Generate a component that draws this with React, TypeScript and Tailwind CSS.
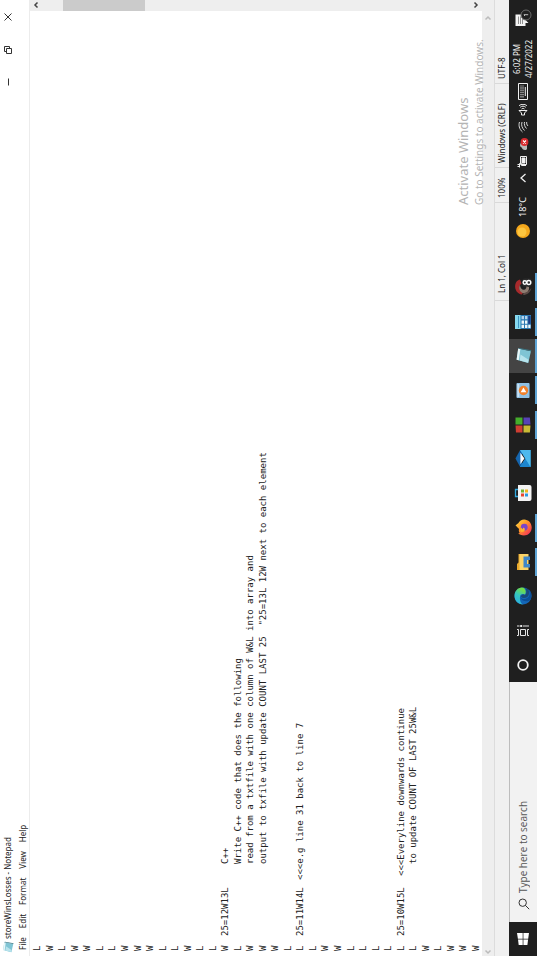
import { ReactNode } from "react";
import clsx from "clsx";

interface Line {
  mark: string;
  tally?: string;
  note?: string;
  indent?: string;
}

const lines: Line[] = [
  { mark: "L" },
  { mark: "W" },
  { mark: "L" },
  { mark: "W" },
  { mark: "W" },
  { mark: "L" },
  { mark: "L" },
  { mark: "W" },
  { mark: "W" },
  { mark: "W" },
  { mark: "L" },
  { mark: "L" },
  { mark: "W" },
  { mark: "L" },
  { mark: "L" },
  { mark: "W", tally: "25=12W13L", note: "C++", indent: "pl-4" },
  { mark: "L", note: "Write C++ code that does the following", indent: "pl-4" },
  {
    mark: "W",
    note: "read from a txtfile with one column of W&L into array and",
    indent: "pl-4",
  },
  {
    mark: "W",
    note: 'output to txfile with update COUNT LAST 25  "25=13L 12W next to each element',
    indent: "pl-4",
  },
  { mark: "W" },
  { mark: "L" },
  { mark: "L", tally: "25=11W14L", note: "<<<e.g line 31 back to line 7" },
  { mark: "L" },
  { mark: "W" },
  { mark: "W" },
  { mark: "L" },
  { mark: "L" },
  { mark: "L" },
  { mark: "L" },
  {
    mark: "L",
    tally: "25=10W15L",
    note: "<<<Everyline downwards continue",
    indent: "pl-1",
  },
  { mark: "L", note: "to update COUNT OF LAST 25W&L", indent: "pl-4" },
  { mark: "W" },
  { mark: "L" },
  { mark: "W" },
  { mark: "W" },
  { mark: "W" },
];

function NotepadIcon({ className }: { className?: string }) {
  return (
    <svg viewBox="0 0 16 16" className={className}>
      <path d="M4 1.5 14.5 3 12 15 1 12.5Z" fill="#7fc4d4" />
      <path d="M4 1.5 14.5 3 14 5 3.5 3.6Z" fill="#e8f6f8" />
      <path d="M3.4 4.5 9 5.2 4 12.8 1.2 12.3Z" fill="#b7e3ec" />
      <path d="M12 15 14.5 3 15 4 13 15.4Z" fill="#3b7886" />
    </svg>
  );
}

function Chevron({ d, className }: { d: string; className?: string }) {
  return (
    <svg
      viewBox="0 0 8 8"
      className={clsx("h-2 w-2 fill-none", className)}
      strokeWidth="1.5"
    >
      <path d={d} />
    </svg>
  );
}

function EdgeIcon() {
  return (
    <svg viewBox="0 0 18 18" className="size-[18px]">
      <defs>
        <linearGradient id="edgeTop" x1="0" y1="0" x2="1" y2="0.4">
          <stop offset="0" stopColor="#2aa9e8" />
          <stop offset="0.6" stopColor="#35c7c0" />
          <stop offset="1" stopColor="#6fdc4b" />
        </linearGradient>
      </defs>
      <circle cx="9" cy="9" r="8.5" fill="#1467b8" />
      <path
        d="M.5 9C.8 4 4.3 .5 9 .5c5 0 8.5 3.5 8.5 7.2 0 2.6-2 4-4.3 4-2 0-3-.8-2.600-1.500.8-1.200.6-3.700-2.100-4.200C4.700 5.500 1.200 7 .5 9Z"
        fill="url(#edgeTop)"
      />
      <path
        d="M8 6.200C5.800 7.500 5 11 7.200 13.700c2 2.400 5.800 2.500 8.800.6-2 3-6.500 4-9.700 2.500C2.500 15 2.600 8 8 6.200Z"
        fill="#0c4f97"
      />
      <path
        d="M8.500 7c2 .2 2.600 2 1.700 3.500-.5 1 1 2 3.800 1.800 1.500-.1 2.800-.8 3.300-1.600-.3 1.600-1 2.800-1.800 3.600-2.500 1.400-6 1-7.500-1C6.300 11 6.800 8.200 8.500 7Z"
        fill="#1f1f1f"
        opacity=".4"
      />
    </svg>
  );
}

function ExplorerIcon() {
  return (
    <svg viewBox="0 0 16 14" className="h-[14px] w-4">
      <path d="M0 1h6l1.500 1.500H16V12H0Z" fill="#e9a92c" />
      <path d="M0 3.500h16v9H0Z" fill="#fbd467" />
      <path d="M2.500 7.500h11V14h-3.500v-3h-4v3H2.500Z" fill="#3f87c9" />
    </svg>
  );
}

function FirefoxIcon() {
  return (
    <svg viewBox="0 0 18 18" className="size-[17px]">
      <defs>
        <linearGradient id="fox" x1="1" y1="0" x2="0.1" y2="1">
          <stop offset="0" stopColor="#ffe14a" />
          <stop offset="0.45" stopColor="#ff9a28" />
          <stop offset="1" stopColor="#f3245c" />
        </linearGradient>
      </defs>
      <path
        d="M11 .5c1 1 2 1.800 2.500 3 2.500 1.200 4 3.500 4 6.200 0 4.500-3.800 8-8.500 8s-8.500-3.600-8.500-8.200C.5 6.500 1.800 5 2.600 3.400c.4.6.6 1 .7 1.500C5 3.800 6.500 4 7.500 4.300 8.500 2.800 9.800 2 11 .5Z"
        fill="url(#fox)"
      />
      <circle cx="9.300" cy="9.800" r="3.600" fill="#7a45c9" />
      <path
        d="M4.500 6c1.800-.8 3.500.2 4.500 1-1 .2-1.800.6-1.800 1.200 1.500.2 2 .8 1.200 1.600-1 .8-2.800.8-3.400-.2C4.400 8.600 4.200 7 4.500 6Z"
        fill="#ffb22e"
      />
    </svg>
  );
}

function StoreIcon() {
  return (
    <svg viewBox="0 0 18 18" className="size-[18px]">
      <path d="M5.500 4.500V1.500h7V4.500" fill="none" stroke="#31a8de" strokeWidth="1.300" />
      <path d="M1 4h16V15.500a2 2 0 0 1-2 2H3a2 2 0 0 1-2-2Z" fill="#f4f4f4" />
      <path d="M5.500 7h3v3h-3Z" fill="#e8472e" />
      <path d="M9.500 7h3v3h-3Z" fill="#73b530" />
      <path d="M5.500 11h3v3h-3Z" fill="#2c9be0" />
      <path d="M9.500 11h3v3h-3Z" fill="#f4b51e" />
    </svg>
  );
}

function MailIcon() {
  return (
    <svg viewBox="0 0 18 16" className="h-4 w-[17px]">
      <path d="M0 5 9 0l9 5v2H0Z" fill="#1565ad" />
      <path d="M0 5v11h18V5L9 10.500Z" fill="#2ba3e3" />
      <path d="M0 5 9 10.500 0 16Z" fill="#1d86cf" />
      <path d="M3 5.200h12L9 9.500Z" fill="#f5fafd" />
      <path d="M0 16 18 5v11Z" fill="#4db9ee" />
    </svg>
  );
}

function SquaresIcon() {
  return (
    <svg viewBox="0 0 16 16" className="size-4">
      <path d="M.5 1 7.500.5v7h-7Z" fill="#cf3e33" />
      <path d="M8.500.5h7v7h-7Z" fill="#46ad2c" />
      <path d="M.5 8.500h7v7l-7-.6Z" fill="#c9ba35" />
      <path d="M8.500 8.500h7v6.400l-7 .6Z" fill="#5742b5" />
    </svg>
  );
}

function MediaIcon() {
  return (
    <svg viewBox="0 0 16 14" className="h-[14px] w-[15px]">
      <rect width="16" height="14" rx="1" fill="#8fc0e4" />
      <path d="M1 1h14v2H1Z" fill="#c9e1f3" />
      <circle cx="8" cy="7.500" r="5" fill="#f0802b" />
      <path d="M6.200 4.500 11.200 7.500l-5 3Z" fill="#fff" />
    </svg>
  );
}

function CalculatorIcon() {
  return (
    <svg viewBox="0 0 14 16" className="h-4 w-[14px]">
      <path d="M0 0h14v16H0Z" fill="#2b78b0" />
      <path d="M0 0h14v5.500H0Z" fill="#86d9ef" />
      <path d="M1 3.500h12" stroke="#3c93c2" />
      <path
        d="M1 6.500h3.300V9H1ZM5.300 6.500h3.300V9H5.300ZM1 10h3.300v2.400H1ZM5.300 10h3.300v2.400H5.300ZM1 13.300h3.300v2.200H1Z"
        fill="#eef6fa"
      />
      <path d="M9.700 6.500H13V9H9.700ZM9.700 10H13v2.400H9.700Z" fill="#b4d2ec" />
      <path d="M5.300 13.300H13v2.200H5.300Z" fill="#1c3a86" />
    </svg>
  );
}

function KnightIcon() {
  return (
    <svg viewBox="0 0 18 18" className="size-[18px]">
      <path
        d="M1.500 8C2 3.500 6 .5 11 1.200 14 1.600 16 3.500 16.500 6l-4 1.500C10 4.500 6 4.500 3.500 9Z"
        fill="#a72a2c"
      />
      <path
        d="M3 8.500c1.500-3 5-4.300 8-2.500-3 .2-5 2-4.800 4 .2 1.700 1.800 2.600 3.800 2.400l-1 2.600C5 15.500 2 12.500 3 8.500Z"
        fill="#8f7c71"
      />
      <path d="M1 9c0 4 2.500 7.500 7 8.300-3-2-4.700-4.500-5-7.300Z" fill="#5c4b47" />
      <rect x="9.500" y="8.500" width="8" height="9" rx="2" fill="#2c2c2c" />
      <circle cx="13.500" cy="10.800" r="1.700" fill="none" stroke="#fff" strokeWidth="1.400" />
      <circle cx="13.500" cy="14.800" r="2" fill="none" stroke="#fff" strokeWidth="1.400" />
    </svg>
  );
}

const apps: { label: string; icon: ReactNode; open?: boolean; active?: boolean }[] = [
  {
    label: "Cortana",
    icon: (
      <svg viewBox="0 0 12 12" className="size-3">
        <circle cx="6" cy="6" r="4.800" fill="none" stroke="#f2f2f2" strokeWidth="1.800" />
      </svg>
    ),
  },
  {
    label: "Task View",
    icon: (
      <svg viewBox="0 0 13 12" className="h-3 w-[13px] fill-none stroke-[#e6e6e6]">
        <path d="M1.500 3.500h6v5h-6ZM1.500 0v1.500h6V0M1.500 12v-1.500h6V12M11 0v2.500M11 6v6" />
        <path d="M10 4.200h2" strokeWidth="2" />
      </svg>
    ),
  },
  { label: "Microsoft Edge", icon: <EdgeIcon /> },
  { label: "File Explorer", icon: <ExplorerIcon />, open: true },
  { label: "Firefox", icon: <FirefoxIcon />, open: true },
  { label: "Microsoft Store", icon: <StoreIcon /> },
  { label: "Mail", icon: <MailIcon /> },
  { label: "Blocks", icon: <SquaresIcon />, open: true },
  { label: "Media Player", icon: <MediaIcon />, open: true },
  {
    label: "Notepad",
    icon: <NotepadIcon className="size-[17px]" />,
    open: true,
    active: true,
  },
  { label: "Calculator", icon: <CalculatorIcon />, open: true },
  { label: "Game", icon: <KnightIcon />, open: true },
];

function TitleBar() {
  return (
    <header className="flex h-[15px] shrink-0 items-center bg-white pl-[3px]">
      <NotepadIcon className="size-3" />
      <h1 className="ml-0.5 text-[8px] leading-[15px] text-[#222]">
        storeWinsLosses - Notepad
      </h1>
      <div className="ml-auto flex h-full">
        <button aria-label="Minimize" className="flex w-8 items-center justify-center">
          <svg viewBox="0 0 8 8" className="size-2 stroke-[#333]">
            <path d="M.5 4.500h7" />
          </svg>
        </button>
        <button aria-label="Restore" className="flex w-8 items-center justify-center">
          <svg viewBox="0 0 8 8" className="size-2 fill-none stroke-[#333]">
            <path d="M.5 2.500h5v5h-5ZM2.500 2.500v-2h5v5h-2" />
          </svg>
        </button>
        <button aria-label="Close" className="flex w-[34px] items-center justify-center">
          <svg viewBox="0 0 8 8" className="size-2 stroke-[#333]">
            <path d="M.5 .5l7 7M7.500 .5l-7 7" />
          </svg>
        </button>
      </div>
    </header>
  );
}

function MenuBar() {
  return (
    <nav className="flex h-[15px] shrink-0 gap-[9px] border-b border-[#ececec] bg-white pl-1.5 text-[8px] leading-4 text-[#222]">
      <button>File</button>
      <button>Edit</button>
      <button>Format</button>
      <button>View</button>
      <button>Help</button>
    </nav>
  );
}

function Editor() {
  return (
    <div className="flex min-h-0 flex-1 bg-white">
      <div
        role="textbox"
        aria-multiline="true"
        aria-label="Text editor"
        className="flex min-w-0 flex-1 flex-col overflow-hidden pt-px pl-[5px] font-['DejaVu_Sans_Mono','Liberation_Mono',monospace] text-[9px] text-[#222]"
      >
        {lines.map((line, i) => (
          <div key={i} className="flex min-h-0 flex-1 items-center leading-3 whitespace-pre">
            <span className="w-[15px]">{line.mark}</span>
            <span className="w-14">{line.tally}</span>
            <span className={line.indent}>{line.note}</span>
          </div>
        ))}
      </div>
      <div className="flex w-[11px] flex-col items-center bg-[#eeeeee] py-0.5">
        <Chevron d="M1.500 5.500 4 3l2.500 2.500" className="stroke-[#444]" />
        <div className="mt-[23px] h-[82px] w-full bg-[#cbcbcb]" />
        <Chevron d="M1.500 2.500 4 5l2.500-2.500" className="mt-auto stroke-[#444]" />
      </div>
    </div>
  );
}

function StatusBar() {
  return (
    <footer className="flex h-[15px] shrink-0 border-t border-[#dcdcdc] bg-[#f0f0f0] text-[8px] leading-[14px] text-[#222]">
      <span className="ml-auto w-[98px] border-l border-[#d9d9d9] pl-[7px]">Ln 1, Col 1</span>
      <span className="w-[35px] border-l border-[#d9d9d9] pl-1">100%</span>
      <span className="w-[84px] border-l border-[#d9d9d9] pl-1">Windows (CRLF)</span>
      <span className="w-[84px] border-l border-[#d9d9d9] pl-1">UTF-8</span>
    </footer>
  );
}

function TrayButton({ label, children }: { label: string; children: ReactNode }) {
  return (
    <button aria-label={label} className="flex w-[17px] items-center justify-center">
      {children}
    </button>
  );
}

function Tray() {
  return (
    <div className="ml-auto flex text-[#f0f0f0]">
      <button className="flex w-[54px] items-center gap-[7px] pl-[3px] text-[9px]">
        <svg viewBox="0 0 14 14" className="size-[14px]">
          <circle cx="7" cy="7" r="7" fill="#f5a81c" />
          <circle cx="6" cy="6" r="4.500" fill="#fdc640" />
        </svg>
        18°C
      </button>
      <TrayButton label="Show hidden icons">
        <svg viewBox="0 0 10 10" className="size-[10px] fill-none stroke-[#f0f0f0]">
          <path d="M1 7.500 5 3l4 4.500" strokeWidth="1.300" />
        </svg>
      </TrayButton>
      <TrayButton label="Battery">
        <svg viewBox="0 0 13 12" className="h-3 w-[13px] fill-none stroke-[#f0f0f0]">
          <path d="M3.500 3.500h8v6h-8Z" />
          <path d="M5 5h5v3H5Z" fill="#f0f0f0" />
          <path d="M1.500 .5v2M3.500 .5v2M.5 2.500h4v2h-2V9" />
        </svg>
      </TrayButton>
      <TrayButton label="Sync error">
        <svg viewBox="0 0 13 12" className="h-3 w-[13px]">
          <path
            d="M1 8c0-2 1-3 2.200-3C4 3 6 2.500 7.500 3.500 9 4 10 5 10 7v3H2.500C1.500 10 1 9 1 8Z"
            fill="#b9b9b9"
          />
          <circle cx="9" cy="7.500" r="3.900" fill="#d92b2f" />
          <path d="m7.500 6 3 3m0-3-3 3" stroke="#fff" strokeWidth="1.100" />
        </svg>
      </TrayButton>
      <TrayButton label="Network">
        <svg viewBox="0 0 12 12" className="size-3 fill-none stroke-[#d8d8d8]">
          <path d="M1 5.500C4 2 8 1.500 11 2.500M2.500 7.500C5 5 8 4 11 5M4.500 9.500C6.500 7.500 9 7 11 7.500M7 11c1.200-1.200 2.500-1.500 4-1.300" />
        </svg>
      </TrayButton>
      <TrayButton label="Volume">
        <svg viewBox="0 0 12 12" className="size-3 fill-none stroke-[#f0f0f0]">
          <path d="M1 4.500h2L5.500 2v8L3 7.500H1ZM7 4.500c.8.8.8 2.200 0 3M8.700 3.200c1.500 1.500 1.500 4.100 0 5.600M10.200 2c2 2.200 2 5.800 0 8" />
        </svg>
      </TrayButton>
      <button aria-label="Touch keyboard" className="flex w-5 items-center justify-center">
        <svg viewBox="0 0 17 10" className="h-[10px] w-[17px] fill-none stroke-[#f0f0f0]">
          <path d="M.5 .5h16v9H.5Z" />
          <path d="M2.500 3h12M2.500 5h12" strokeDasharray="1.400 .8" />
          <path d="M4 7.300h9" />
        </svg>
      </button>
      <button className="flex w-[46px] flex-col items-center justify-center text-[8px] leading-3">
        <span>6:02 PM</span>
        <span>4/27/2022</span>
      </button>
      <button aria-label="1 notification" className="flex w-9 items-center justify-center">
        <svg viewBox="0 0 18 18" className="size-[18px]">
          <path d="M1 1.500h11.500v10H7L4 14.500v-3H1Z" fill="#f4f4f4" />
          <path d="M3 4.500h7.500M3 6.500h7.500M3 8.500h5" stroke="#777" strokeWidth=".8" />
          <circle cx="12" cy="12" r="5" fill="#1f1f1f" stroke="#6a6a6a" />
          <path d="M11 10.800 12.300 10v4.200" fill="none" stroke="#bdbdbd" />
        </svg>
      </button>
    </div>
  );
}

function Taskbar() {
  return (
    <div className="flex h-7 shrink-0 bg-[#1f1f1f]">
      <button aria-label="Start" className="flex w-[34px] items-center justify-center">
        <svg viewBox="0 0 12 12" className="size-3 fill-white">
          <path d="M0 1.700 5.500 1v4.700H0ZM6.300 .9 12 0v5.700H6.300ZM0 6.400h5.500v4.700L0 10.400ZM6.300 6.400H12V12l-5.700-.8Z" />
        </svg>
      </button>
      <label className="flex w-60 items-center gap-[5px] border-t border-[#bdbdbd] bg-[#f2f2f2] pl-3">
        <svg viewBox="0 0 12 12" className="size-3 fill-none stroke-[#333]">
          <circle cx="7.300" cy="4.700" r="3.700" />
          <path d="M4.700 7.300 .8 11.200" />
        </svg>
        <input
          aria-label="Search"
          placeholder="Type here to search"
          className="min-w-0 flex-1 bg-transparent font-['Open_Sans',sans-serif] text-[10px] outline-none placeholder:text-[#555]"
        />
      </label>
      <div className="flex w-[412px]">
        {apps.map((app) => (
          <button
            key={app.label}
            aria-label={app.label}
            className={clsx(
              "flex flex-1 flex-col items-center",
              app.active && "bg-[#444444]"
            )}
          >
            <span className="flex min-h-0 w-full flex-1 items-center justify-center pt-0.5">
              {app.icon}
            </span>
            <span
              className={clsx(
                "h-0.5",
                app.active ? "w-full" : "w-7",
                app.open && "bg-[#5fa5d6]"
              )}
            />
          </button>
        ))}
      </div>
      <Tray />
    </div>
  );
}

export default function App() {
  return (
    <div className="h-screen w-full overflow-hidden bg-white">
      {/* The whole desktop is turned a quarter to the left */}
      <div className="relative flex h-[100vw] w-[100vh] origin-top-left translate-y-[100vh] -rotate-90 flex-col font-['Noto_Sans','Open_Sans',sans-serif]">
        <TitleBar />
        <MenuBar />
        <Editor />
        <div className="flex h-3 shrink-0 items-center bg-[#eeeeee] pr-[14px]">
          <Chevron d="M5.500 1.500 3 4l2.500 2.500" className="stroke-[#bbb]" />
          <Chevron d="M2.500 1.500 5 4 2.500 6.500" className="ml-auto stroke-[#bbb]" />
        </div>
        <StatusBar />
        <Taskbar />
        <div className="pointer-events-none absolute right-10 bottom-[51px] w-[165px] whitespace-nowrap text-[#b4b4b4]">
          <p className="text-[13px] leading-[18px]">Activate Windows</p>
          <p className="text-[10px] leading-[14px]">
            Go to Settings to activate Windows.
          </p>
        </div>
      </div>
    </div>
  );
}
